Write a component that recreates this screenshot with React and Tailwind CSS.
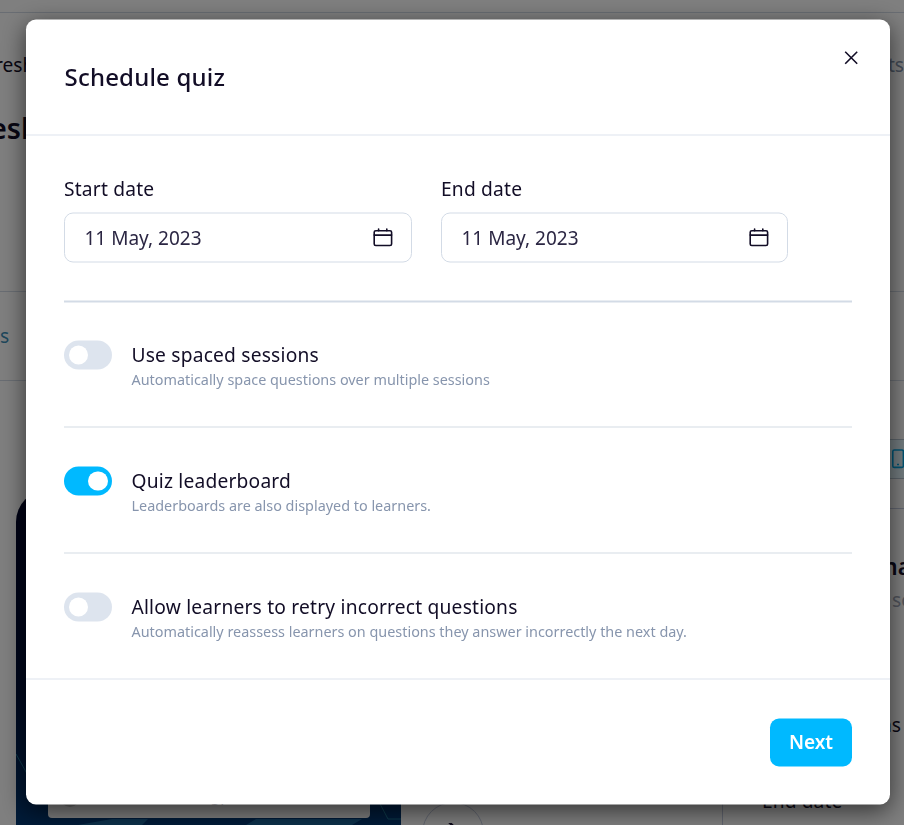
import { useState } from "react";

const OPTIONS = [
  {
    id: "spaced",
    title: "Use spaced sessions",
    description: "Automatically space questions over multiple sessions",
    rowClass: "h-[125px] pt-[38px] border-b",
  },
  {
    id: "leaderboard",
    title: "Quiz leaderboard",
    description: "Leaderboards are also displayed to learners.",
    rowClass: "h-[126px] pt-[39px] border-b",
  },
  {
    id: "retry",
    title: "Allow learners to retry incorrect questions",
    description:
      "Automatically reassess learners on questions they answer incorrectly the next day.",
    rowClass: "h-[125px] pt-[39px]",
  },
];

function CalendarIcon() {
  return (
    <svg
      className="h-5 w-5"
      viewBox="0 0 20 20"
      fill="none"
      stroke="currentColor"
      strokeWidth="1.6"
      strokeLinecap="round"
    >
      <rect x="1.2" y="3.2" width="17.4" height="14.8" rx="1.6" />
      <path d="M1.2 7.6h17.4M5.6 1.5v1.7M13.8 1.5v1.7" />
    </svg>
  );
}

function DateField({ label, value }) {
  return (
    <div>
      <div className="h-[37px] text-[19.2px] leading-[26px] tracking-[0.2px]">
        {label}
      </div>
      <div className="flex h-[50px] items-center justify-between rounded-[9px] border border-[#d3dbe6] pl-[19.5px] pr-[18.5px]">
        <span className="text-[19px] text-[#2b2643]">{value}</span>
        <CalendarIcon />
      </div>
    </div>
  );
}

function Toggle({ checked, onChange }) {
  return (
    <button
      type="button"
      role="switch"
      aria-checked={checked}
      onClick={onChange}
      className={`flex h-[29px] w-12 shrink-0 items-center rounded-full px-[4.5px] ${
        checked ? "justify-end bg-[#00b9ff]" : "justify-start bg-[#dde4ee]"
      }`}
    >
      <span className="h-[19.5px] w-[19.5px] rounded-full bg-white" />
    </button>
  );
}

function OptionRow({ option, checked, onChange }) {
  return (
    <div className={`flex gap-[19px] border-[#d3dbe4] ${option.rowClass}`}>
      <Toggle checked={checked} onChange={onChange} />
      <div className="-mt-px pl-[0.5px]">
        <div className="text-[19.2px] leading-[29px] tracking-[0.2px]">
          {option.title}
        </div>
        <div className="text-[14.4px] leading-[21px] text-[#8795ad]">
          {option.description}
        </div>
      </div>
    </div>
  );
}

// Quiz page that sits under the dialog
function QuizPage() {
  return (
    <div className="flex h-[825px] flex-col overflow-hidden bg-white">
      <div className="h-[13px] shrink-0 border-b border-[#d3dbe6]" />
      <div className="h-[279px] shrink-0 border-b border-[#d3dbe6]">
        <div className="flex h-[104px] justify-between pt-[38px]">
          <div className="w-[80px]">
            <div className="-ml-[5px] text-[19.2px] leading-7">resh</div>
          </div>
          <div className="text-[19.2px] leading-7 text-[#8595ad]">
            Results
          </div>
        </div>
        <div className="-ml-[10px] -mt-[9px] text-[28.8px] font-semibold leading-10">
          esh
        </div>
      </div>
      <div className="h-[89px] shrink-0 border-b border-[#d3dbe6] pt-[30px] text-[19.2px] leading-7 text-[#3d8fb8]">
        s
      </div>
      <div className="flex grow">
        <div className="w-[722px] pl-4 pt-[109px]">
          <div className="flex">
            <div className="h-[400px] w-[385px] overflow-hidden rounded-tl-[32px] bg-gradient-to-b from-[#000428] via-[#00103a] to-[#004c90] pl-8 pt-[260px]">
              <div className="flex h-[68px] w-[322px] items-center justify-between rounded-[4px] bg-white px-3">
                <span className="h-5 w-5 translate-y-[13px] rounded-full bg-[#cccccc]" />
                <span className="translate-y-[11px] pr-[128px] text-base">
                  gp
                </span>
              </div>
              <svg className="-ml-8 -mt-[68px] h-[75px] w-[385px]" viewBox="0 0 385 75">
                <path d="M96 69h36l-6 6H62zM240 69h106l-10 6H230z" fill="#2a7fae" opacity="0.6" />
                <path d="M362 50l10 19h13M0 4l14 25" fill="none" stroke="#1d7595" />
              </svg>
            </div>
            <div className="ml-[21px] mt-[312px] flex h-[62px] w-[62px] items-center justify-center rounded-full border border-[#c5cce0]">
              <svg className="h-5 w-5" viewBox="0 0 20 20" fill="none" stroke="#161031" strokeWidth="2.5">
                <path d="M6 -1l9 9-9 9" />
              </svg>
            </div>
          </div>
        </div>
        <div className="flex w-[182px] flex-col border-l border-[#c5cce0]">
          <div className="h-[128px] shrink-0 border-b border-[#c5cce0] pt-[58px]">
            <div className="ml-[140px] flex h-10 items-center border-y border-[#b8c8d4] bg-[#e5f8ff] pl-[29px]">
              <svg className="h-5 w-3 shrink-0" viewBox="0 0 12 20" fill="none" stroke="#00a8e8" strokeWidth="1.6">
                <rect x="0.8" y="1" width="10.6" height="17.4" rx="1.5" />
                <path d="M5 15.5h2" />
              </svg>
            </div>
          </div>
          <div className="flex h-[120px] shrink-0 flex-col pl-[163px] pt-[42px]">
            <div className="-ml-[3px] text-[23px] font-semibold leading-[30px]">
              na
            </div>
            <div className="pl-[6px] pt-1 text-[19.2px] leading-[30px] text-[#a2a8b8]">
              se
            </div>
          </div>
          <div className="flex h-[111px] shrink-0 items-end justify-end pr-[3px] text-[19.2px] leading-[28px]">
            <span className="pb-[1px]">Questions</span>
          </div>
          <div className="pl-[39px] pt-[47px] text-[19.2px] leading-7 tracking-[0.1px]">
            End date
          </div>
        </div>
      </div>
    </div>
  );
}

export default function App() {
  const [enabled, setEnabled] = useState({ leaderboard: true });

  const toggle = (id) => setEnabled((prev) => ({ ...prev, [id]: !prev[id] }));

  return (
    <div className="h-[825px] overflow-hidden font-['Noto_Sans',sans-serif] text-[#120d26]">
      <QuizPage />

      <div className="fixed inset-0 flex items-start bg-black/50 pl-[26px] pt-5">
        <div
          role="dialog"
          className="w-[864px] -translate-y-[0.5px] overflow-hidden rounded-[10px] bg-white shadow-[0_6px_24px_rgba(0,0,0,0.6)]"
        >
          <div className="flex h-[116px] justify-between border-b border-[#dde4ee] pl-[38.5px] pr-[31px]">
            <h2 className="pt-[41px] text-[24px] font-medium leading-[32px] tracking-[0.2px]">
              Schedule quiz
            </h2>
            <button type="button" className="mt-[30px] h-4 w-4" aria-label="Close">
              <svg viewBox="0 0 16 16" fill="none" stroke="currentColor" strokeWidth="1.6">
                <path d="M2.2 2.2l12 12M14.2 2.2l-12 12" />
              </svg>
            </button>
          </div>

          <div className="px-[38px]">
            <div className="grid h-[167px] grid-cols-[348px_347px] gap-[29px] border-b-2 border-[#d3dbe6] pt-[40px]">
              <DateField label="Start date" value="11 May, 2023" />
              <DateField label="End date" value="11 May, 2023" />
            </div>
            {OPTIONS.map((option) => (
              <OptionRow
                key={option.id}
                option={option}
                checked={Boolean(enabled[option.id])}
                onChange={() => toggle(option.id)}
              />
            ))}
          </div>

          <div className="flex h-[126px] items-start justify-end border-t border-[#dde4ee] pr-[38px] pt-[39px]">
            <button
              type="button"
              className="h-12 w-[82px] rounded-[9px] bg-[#00b9ff] pb-px text-[19px] font-semibold text-white"
            >
              Next
            </button>
          </div>
        </div>
      </div>
    </div>
  );
}
